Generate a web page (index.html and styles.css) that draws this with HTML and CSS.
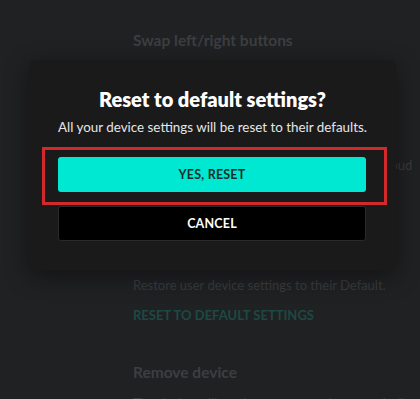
FILE: index.html
```html
<!DOCTYPE html>
<html lang="en">
    <head>
        <meta charset="UTF-8">
        <title>Reset settings</title>
        <link rel="stylesheet" href="styles.css">
    </head>
    <body>
        <div class="page">
            <h2 class="section-title first">Swap left/right buttons</h2>
            <p class="behind">Keep your device settings backed up in the cloud</p>
            <div class="spacer"></div>
            <p class="section-text">Restore user device settings to their Default.</p>
            <p class="section-link">RESET TO DEFAULT SETTINGS</p>
            <h2 class="section-title">Remove device</h2>
            <p class="section-text">The device will not be reconnected automatically</p>
        </div>

        <div class="modal">
            <h1>Reset to default settings?</h1>
            <p class="modal-text">All your device settings will be reset to their defaults.</p>
            <div class="highlight">
                <button class="btn btn-primary">YES, RESET</button>
            </div>
            <button class="btn btn-cancel">CANCEL</button>
        </div>
    </body>
</html>
```

FILE: styles.css
```css
body {
    margin: 0;
    padding: 0;
    background-color: #202123;
    font-family: Lato, "Open Sans", sans-serif;
    height: 399px;
    overflow: hidden;
}

.page {
    padding: 31px 0 0 133px;
    color: #3b3c3f;
}

.section-title {
    font-size: 15.5px;
    font-weight: bold;
    margin: 0;
    color: #3d3e41;
}

.behind {
    margin: 108px 0 0 2px;
    font-size: 13px;
    white-space: nowrap;
    color: #3a3b3e;
}

.spacer {
    height: 104px;
}

.section-text {
    font-size: 13px;
    margin: 0;
    white-space: nowrap;
    color: #3a3b3e;
}

.section-link {
    font-size: 13px;
    font-weight: bold;
    margin: 14px 0 40px 0;
    color: #1d4944;
}

.page .section-title + .section-text {
    margin-top: 14px;
}

.modal {
    position: absolute;
    left: 29px;
    top: 60px;
    width: 367px;
    height: 210px;
    box-sizing: border-box;
    background-color: #1a1a1b;
    border-radius: 6px;
    box-shadow: 0 6px 24px rgba(0, 0, 0, 0.45);
    padding: 27px 0 0 13px;
    text-align: center;
    color: #fff;
}

.modal h1 {
    font-size: 20px;
    font-weight: 800;
    margin: 0 0 0 -13px;
    line-height: 24px;
}

.modal-text {
    font-size: 13.4px;
    margin: 8px 0 0 -13px;
    color: #e6e6e6;
    line-height: 17px;
    white-space: nowrap;
}

.highlight {
    margin: 11px 0 0 0;
    width: 345px;
    height: 58px;
    box-sizing: border-box;
    border: 3px solid #d22a2c;
    padding: 7px 0 0 13px;
}

.btn {
    display: block;
    width: 308px;
    height: 35px;
    border: none;
    border-radius: 3px;
    font-family: Lato, "Open Sans", sans-serif;
    font-size: 12.5px;
    font-weight: bold;
    letter-spacing: 0.2px;
    cursor: pointer;
}

.btn-primary {
    background-color: #00e8d2;
    color: #16302c;
}

.btn-cancel {
    margin: 1px 0 0 16px;
    background-color: #000;
    color: #fff;
    border: 1px solid #2a2a2b;
}
```
